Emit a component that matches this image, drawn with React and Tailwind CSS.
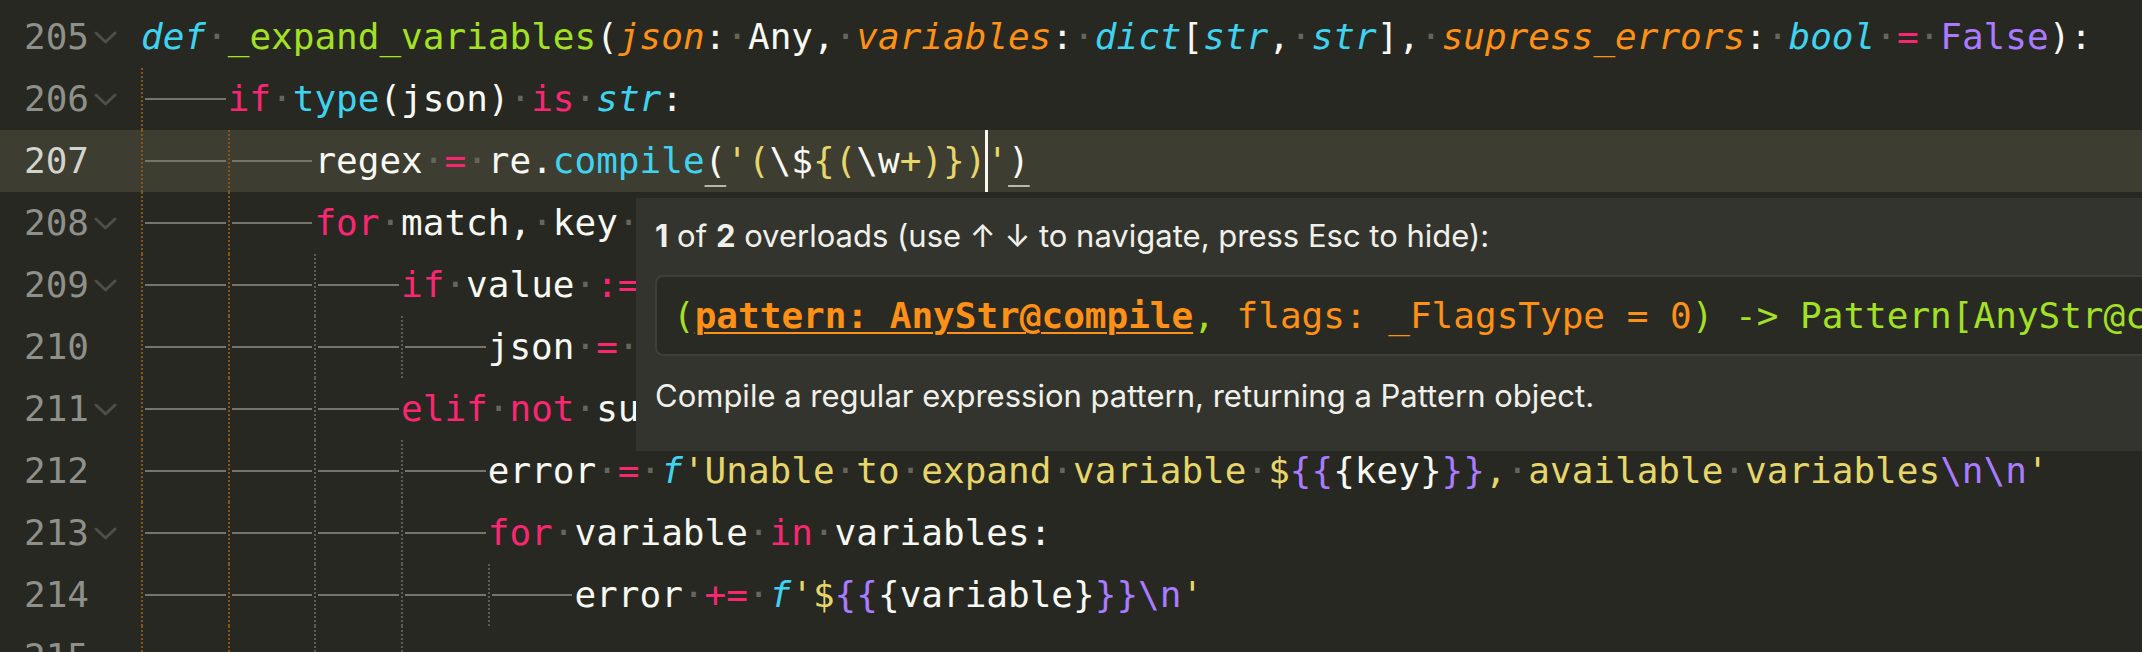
import React from "react";

// colour classes for the Monokai tokens
const C = {
  w: "text-[#f8f8f2]",
  p: "text-[#f92672]",
  c: "text-[#3fd3ef]",
  ci: "text-[#3fd3ef] italic",
  g: "text-[#a3e124]",
  oi: "text-[#fd9016] italic",
  v: "text-[#aa7bff]",
  y: "text-[#e6d66a]",
};

const lines = [
  {
    n: 205,
    tabs: 0,
    fold: true,
    toks: [
      ["def", "ci"], [" ", "w"], ["_expand_variables", "g"], ["(", "w"], ["json", "oi"], [": Any, ", "w"],
      ["variables", "oi"], [": ", "w"], ["dict", "ci"], ["[", "w"], ["str", "ci"], [", ", "w"], ["str", "ci"],
      ["], ", "w"], ["supress_errors", "oi"], [": ", "w"], ["bool", "ci"], [" ", "w"], ["=", "p"], [" ", "w"],
      ["False", "v"], ["):", "w"],
    ],
  },
  {
    n: 206,
    tabs: 1,
    fold: true,
    toks: [["if", "p"], [" ", "w"], ["type", "c"], ["(json) ", "w"], ["is", "p"], [" ", "w"], ["str", "ci"], [":", "w"]],
  },
  { n: 207, tabs: 2, current: true, toks: [] },
  {
    n: 208,
    tabs: 2,
    fold: true,
    toks: [["for", "p"], [" match, key ", "w"], ["in", "p"], [" regex.", "w"], ["findall", "c"], ["(json):", "w"]],
  },
  {
    n: 209,
    tabs: 3,
    fold: true,
    toks: [["if", "p"], [" value ", "w"], [":=", "p"], [" variables.", "w"], ["get", "c"], ["(key):", "w"]],
  },
  {
    n: 210,
    tabs: 4,
    toks: [["json ", "w"], ["=", "p"], [" json.", "w"], ["replace", "c"], ["(match, value)", "w"]],
  },
  {
    n: 211,
    tabs: 3,
    fold: true,
    toks: [["elif", "p"], [" ", "w"], ["not", "p"], [" supress_errors:", "w"]],
  },
  {
    n: 212,
    tabs: 4,
    toks: [
      ["error ", "w"], ["=", "p"], [" ", "w"], ["f", "ci"], ["'Unable to expand variable $", "y"], ["{{", "v"],
      ["{key}", "w"], ["}}", "v"], [", available variables", "y"], ["\\n\\n", "v"], ["'", "y"],
    ],
  },
  {
    n: 213,
    tabs: 4,
    fold: true,
    toks: [["for", "p"], [" variable ", "w"], ["in", "p"], [" variables:", "w"]],
  },
  {
    n: 214,
    tabs: 5,
    toks: [
      ["error ", "w"], ["+=", "p"], [" ", "w"], ["f", "ci"], ["'$", "y"], ["{{", "v"], ["{variable}", "w"],
      ["}}", "v"], ["\\n", "v"], ["'", "y"],
    ],
  },
  { n: 215, tabs: 4, blank: true, toks: [] },
];

// spaces are drawn as grey dots, like Sublime's draw_white_space
const Tok = ({ text, cls }) => {
  const parts = text.split(/( )/);
  return parts.map((part, i) =>
    part === " " ? (
      <span key={i} className="text-[#66665e]">
        ·
      </span>
    ) : part ? (
      <span key={i} className={C[cls]}>
        {part}
      </span>
    ) : null
  );
};

const Chevron = () => (
  <svg width="23" height="13" viewBox="0 0 23 13" fill="none">
    <polyline points="2,2 11.5,11 21,2" stroke="#4f4f48" strokeWidth="3" strokeLinecap="round" strokeLinejoin="round" />
  </svg>
);

const Tab = ({ level, blank }) => (
  <span
    className={`flex h-full w-[4ch] shrink-0 items-center border-l-2 border-dotted ${
      level < 2 ? "border-[#8a5516]" : "border-[#5c5c54]"
    }`}>
    {!blank && <span className="mx-[2px] h-[2px] flex-1 bg-[#75756d]" />}
  </span>
);

const Bracket = ({ children }) => (
  <span className="text-[#f8f8f2] underline decoration-[#b8b8b0] decoration-2 underline-offset-[12px]">
    {children}
  </span>
);

const CurrentLine = () => (
  <>
    <Tok text="regex " cls="w" />
    <Tok text="=" cls="p" />
    <Tok text=" re." cls="w" />
    <Tok text="compile" cls="c" />
    <Bracket>(</Bracket>
    <Tok text="'(" cls="y" />
    <Tok text="\$" cls="w" />
    <Tok text="{(" cls="y" />
    <Tok text="\w" cls="w" />
    <Tok text="+)})" cls="y" />
    <span className="-ml-px -mr-[2px] inline-block h-[62px] w-[3px] bg-[#f8f8f0] align-top" />
    <Tok text="'" cls="y" />
    <Bracket>)</Bracket>
  </>
);

export default function App() {
  return (
    <div className="relative h-[652px] w-[2142px] overflow-hidden bg-[#272822] font-['DejaVu_Sans_Mono',monospace] text-[36px]">
      <div className="flex flex-col pt-[6px]">
        {lines.map((line) => (
          <div
            key={line.n}
            className={`flex h-[62px] shrink-0 leading-[62px] ${line.current ? "bg-[#3e3d32]" : ""}`}>
            <span
              className={`w-[89px] shrink-0 text-right ${line.current ? "text-[#d4d4ce]" : "text-[#8f908a]"}`}>
              {line.n}
            </span>
            <span className="flex w-[52px] shrink-0 items-center pl-[5px]">{line.fold && <Chevron />}</span>
            {Array.from({ length: line.tabs }).map((_, i) => (
              <Tab key={i} level={i} blank={line.blank} />
            ))}
            <span className="whitespace-pre">
              {line.current ? (
                <CurrentLine />
              ) : (
                line.toks.map(([text, cls], i) => <Tok key={i} text={text} cls={cls} />)
              )}
            </span>
          </div>
        ))}
      </div>

      {/* signature help popup */}
      <div className="absolute left-[636px] top-[198px] w-[1600px] bg-[#34342e] pb-[37px] pl-[19px] pt-[20px]">
        <div className="whitespace-pre font-['Inter',sans-serif] text-[31px] leading-[36px] text-[#f0f0ea]">
          <b>1</b> of <b>2</b> overloads (use ↑ ↓ to navigate, press Esc to hide):
        </div>
        <div className="mt-[21px] w-[1600px] whitespace-pre rounded-[8px] border-2 border-[#3f3f38] bg-[#2a2a25] py-[17px] pl-[16px] leading-[43px]">
          <span className="text-[#a3e124]">(</span>
          <span className="font-bold text-[#fd9016] underline decoration-2 underline-offset-[4px]">
            pattern: AnyStr@compile
          </span>
          <span className="text-[#a3e124]">, </span>
          <span className="text-[#fd9016]">flags: _FlagsType = 0</span>
          <span className="text-[#a3e124]">) -&gt; Pattern[AnyStr@compile]</span>
        </div>
        <div className="mt-[22px] font-['Inter',sans-serif] text-[31px] leading-[36px] text-[#f0f0ea]">
          Compile a regular expression pattern, returning a Pattern object.
        </div>
      </div>
    </div>
  );
}
